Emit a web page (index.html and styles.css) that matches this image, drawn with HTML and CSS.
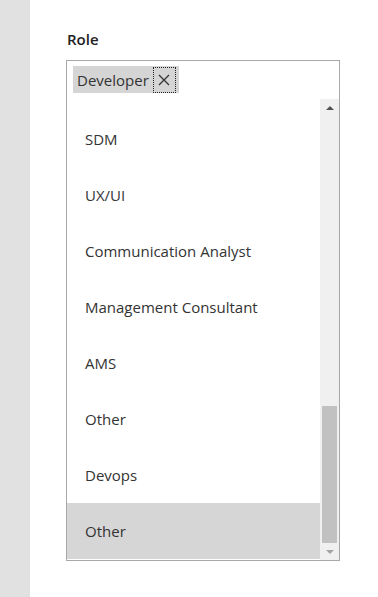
FILE: index.html
```html
<!DOCTYPE html>
<html lang="en">
  <head>
    <meta charset="UTF-8" />
    <title>Role</title>
    <link rel="stylesheet" href="styles.css">
  </head>
  <body>
    <div class="rail"></div>
    <main class="panel">
      <label class="label">Role</label>
      <div class="picker">
        <div class="tags">
          <span class="tag">Developer<button class="tag-remove" aria-label="Remove">
            <svg width="12" height="12" viewBox="0 0 12 12"><path d="M1 1 L11 11 M11 1 L1 11" stroke="#333" stroke-width="1.3" fill="none"/></svg>
          </button></span>
        </div>
        <div class="dropdown">
          <ul class="options">
            <li class="option">SDM</li>
            <li class="option">UX/UI</li>
            <li class="option">Communication Analyst</li>
            <li class="option">Management Consultant</li>
            <li class="option">AMS</li>
            <li class="option">Other</li>
            <li class="option">Devops</li>
            <li class="option active">Other</li>
          </ul>
          <div class="scrollbar">
            <span class="arrow up"></span>
            <div class="track"><div class="thumb"></div></div>
            <span class="arrow down"></span>
          </div>
        </div>
      </div>
    </main>
  </body>
</html>
```

FILE: styles.css
```css
body {
  display: flex;
  margin: 0;
  height: 597px;
  background-color: #ffffff;
  font-family: "Open Sans", "Noto Sans", sans-serif;
  color: #333333;
  overflow: hidden;
}
.rail {
  width: 30px;
  flex-shrink: 0;
  background-color: #e1e1e1;
}
.panel {
  display: flex;
  flex-direction: column;
  padding-top: 29px;
  padding-left: 36px;
}
.label {
  font-size: 15px;
  font-weight: 600;
  color: #222222;
  margin-bottom: 11px;
  margin-left: 1px;
}
.picker {
  width: 272px;
  border: 1px solid #a8a8a8;
}
.tags {
  display: flex;
  height: 38px;
  padding: 5px 0 0 6px;
  box-sizing: border-box;
}
.tag {
  display: flex;
  align-items: center;
  height: 27px;
  padding-left: 4px;
  padding-right: 3px;
  background-color: #d5d5d5;
  font-size: 15px;
  color: #333333;
}
.tag-remove {
  display: flex;
  align-items: center;
  justify-content: center;
  width: 23px;
  height: 26px;
  margin-left: 4px;
  padding: 0;
  background: none;
  border: 1px dotted #222222;
  cursor: pointer;
}
.dropdown {
  display: flex;
  height: 461px;
}
.options {
  flex: 1;
  margin: 0;
  padding: 12px 0 0;
  list-style: none;
  overflow: hidden;
}
.option {
  height: 56px;
  line-height: 56px;
  padding-left: 18px;
  font-size: 15px;
  color: #333333;
}
.option.active {
  background-color: #d6d6d6;
}
.scrollbar {
  display: flex;
  flex-direction: column;
  width: 19px;
  background-color: #f0f0f0;
}
.arrow {
  height: 17px;
  display: flex;
  align-items: center;
  justify-content: center;
}
.arrow::before {
  content: "";
  border-left: 4px solid transparent;
  border-right: 4px solid transparent;
}
.arrow.up::before {
  border-bottom: 4px solid #505050;
}
.arrow.down::before {
  border-top: 4px solid #a3a3a3;
}
.track {
  flex: 1;
  display: flex;
  flex-direction: column;
  justify-content: flex-end;
  padding: 0 2px;
}
.thumb {
  height: 137px;
  background-color: #c1c1c1;
}
```
